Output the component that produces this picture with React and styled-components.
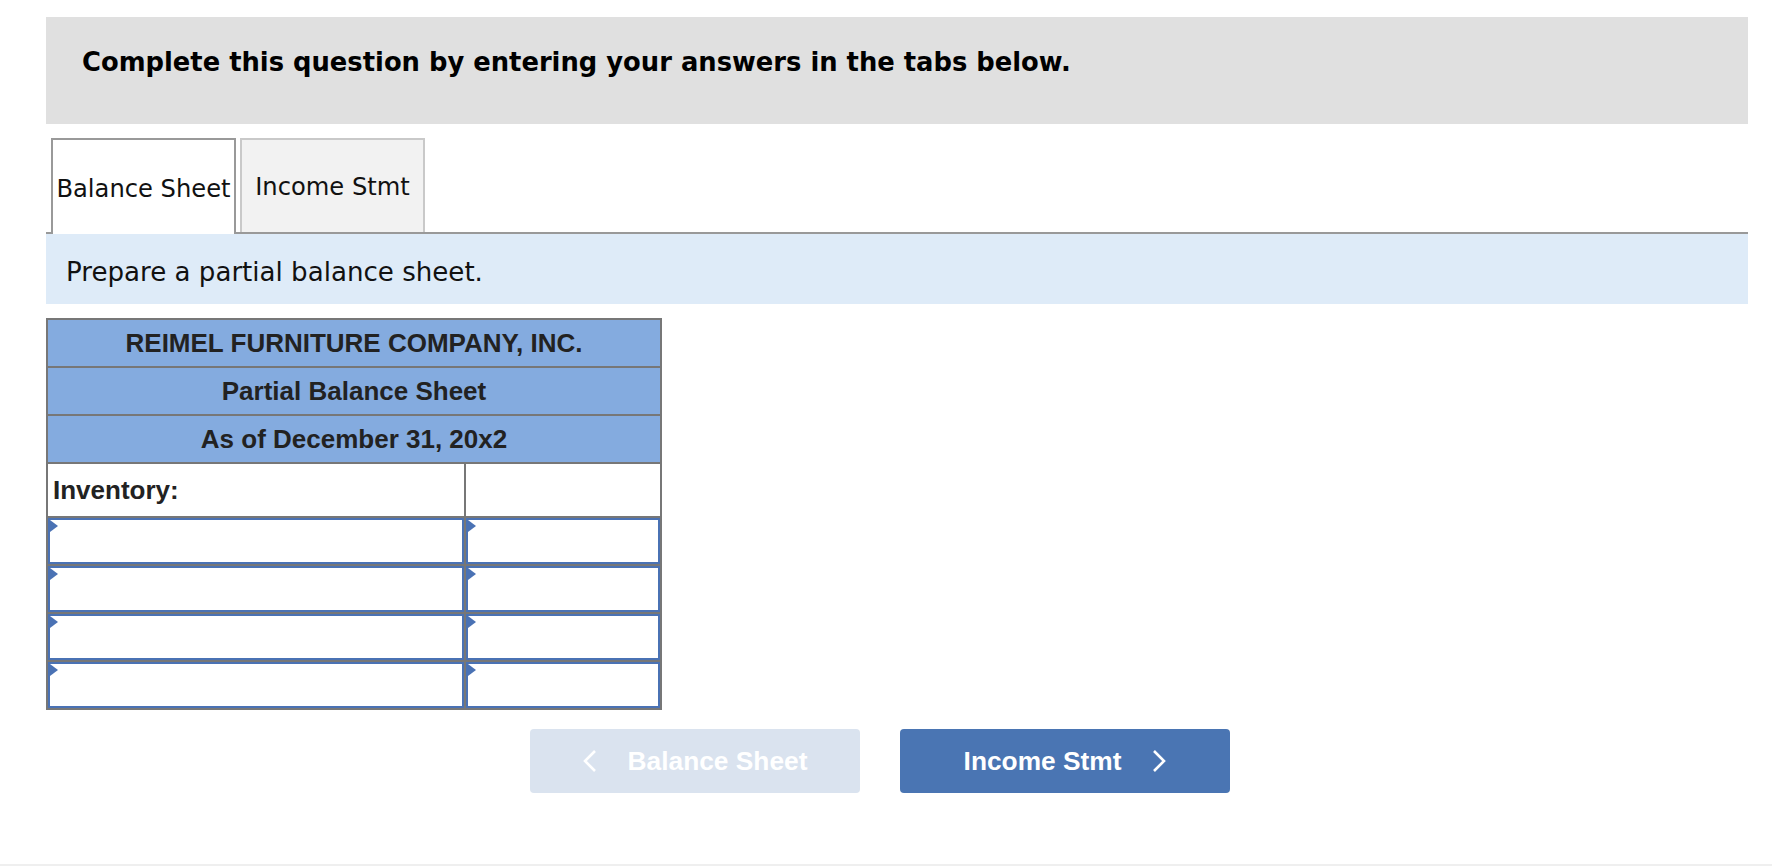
import React from "react";
import styled, { createGlobalStyle } from "styled-components";

const GlobalStyle = createGlobalStyle`
  html, body { margin: 0; padding: 0; background: #ffffff; }
  * { box-sizing: border-box; }
`;

const Page = styled.div`
  height: 866px;
  border-bottom: 2px solid #efefef;
  padding: 17px 24px 0 46px;
`;

const Banner = styled.div`
  height: 107px;
  background: #e0e0e0;
  padding: 30px 0 0 36px;
`;

const Title = styled.h1`
  margin: 0;
  font-family: "DejaVu Sans", Verdana, sans-serif;
  font-weight: bold;
  font-size: 25.8px;
  line-height: 30px;
  color: #000;
`;

const TabStrip = styled.div`
  margin-top: 14px;
  display: flex;
  align-items: flex-end;
  gap: 4px;
  padding-left: 5px;
  border-bottom: 2px solid #999;
  height: 96px;
`;

const Tab = styled.button`
  width: 185px;
  height: ${(p) => (p.$active ? 96 : 94)}px;
  margin-bottom: ${(p) => (p.$active ? -2 : 0)}px;
  padding: ${(p) => (p.$active ? "4px 0 0" : "2px 0 0")};
  background: ${(p) => (p.$active ? "#ffffff" : "#f2f2f2")};
  border: 2px solid ${(p) => (p.$active ? "#999" : "#c9c9c9")};
  border-bottom: none;
  font-family: "DejaVu Sans", Verdana, sans-serif;
  font-size: 24.2px;
  color: #111;
  display: flex;
  align-items: center;
  justify-content: center;
  white-space: nowrap;
  cursor: pointer;
`;

const Instruction = styled.div`
  height: 70px;
  background: #deebf8;
  padding: 23px 0 0 20px;
  font-family: "DejaVu Sans", Verdana, sans-serif;
  font-size: 26.1px;
  line-height: 30px;
  color: #111;
`;

const Sheet = styled.div`
  margin-top: 14px;
  width: 616px;
  background: #777;
  padding: 2px;
  display: grid;
  grid-template-columns: 416px 194px;
  gap: 2px;
  font-family: "Liberation Sans", Arial, sans-serif;
  font-weight: bold;
  font-size: 26px;
  color: #222;
`;

const HeadCell = styled.div`
  grid-column: 1 / -1;
  height: 46px;
  background: #84abdf;
  display: flex;
  align-items: center;
  justify-content: center;
`;

const LabelCell = styled.div`
  height: 52px;
  background: #fff;
  display: flex;
  align-items: center;
  padding-left: 5px;
`;

const InputCell = styled.div`
  position: relative;
  height: 46px;
  background: #fff;
  &::before {
    content: "";
    position: absolute;
    top: 2px;
    left: 2px;
    width: 0;
    height: 0;
    border-top: 6px solid transparent;
    border-bottom: 6px solid transparent;
    border-left: 8px solid #4a72b4;
    pointer-events: none;
  }
`;

const Field = styled.input`
  width: 100%;
  height: 100%;
  margin: 0;
  border: 2px solid #4a72b4;
  border-radius: 0;
  padding: 0 8px;
  font-family: "Liberation Sans", Arial, sans-serif;
  font-size: 22px;
  outline: none;
  background: #fff;
`;

const NavRow = styled.div`
  margin-top: 19px;
  padding-left: 484px;
  display: flex;
  gap: 40px;
`;

const NavButton = styled.button`
  width: 330px;
  height: 64px;
  border: none;
  border-radius: 4px;
  background: ${(p) => (p.$disabled ? "#dae3ef" : "#4a75b3")};
  color: #fff;
  font-family: "Liberation Sans", Arial, sans-serif;
  font-weight: bold;
  font-size: 26.3px;
  display: flex;
  align-items: center;
  justify-content: center;
  gap: 31px;
  padding: 0;
  cursor: ${(p) => (p.$disabled ? "default" : "pointer")};
`;

const Chevron = ({ dir }) => (
  <svg width="14" height="22" viewBox="0 0 14 22" aria-hidden="true">
    <polyline
      points={dir === "left" ? "12,1 2,11 12,21" : "2,1 12,11 2,21"}
      fill="none"
      stroke="#fff"
      strokeWidth="2.6"
      strokeLinejoin="miter"
    />
  </svg>
);

export default function App() {
  const rows = [0, 1, 2, 3];
  return (
    <>
      <GlobalStyle />
      <Page>
        <Banner>
          <Title>Complete this question by entering your answers in the tabs below.</Title>
        </Banner>
        <TabStrip>
          <Tab $active>Balance Sheet</Tab>
          <Tab>Income Stmt</Tab>
        </TabStrip>
        <Instruction>Prepare a partial balance sheet.</Instruction>
        <Sheet>
          <HeadCell>REIMEL FURNITURE COMPANY, INC.</HeadCell>
          <HeadCell>Partial Balance Sheet</HeadCell>
          <HeadCell>As of December 31, 20x2</HeadCell>
          <LabelCell>Inventory:</LabelCell>
          <LabelCell />
          {rows.map((r) => (
            <React.Fragment key={r}>
              <InputCell>
                <Field type="text" aria-label={`Item ${r + 1}`} />
              </InputCell>
              <InputCell>
                <Field type="text" aria-label={`Amount ${r + 1}`} />
              </InputCell>
            </React.Fragment>
          ))}
        </Sheet>
        <NavRow>
          <NavButton $disabled>
            <Chevron dir="left" />
            <span>Balance Sheet</span>
          </NavButton>
          <NavButton>
            <span>Income Stmt</span>
            <Chevron dir="right" />
          </NavButton>
        </NavRow>
      </Page>
    </>
  );
}
